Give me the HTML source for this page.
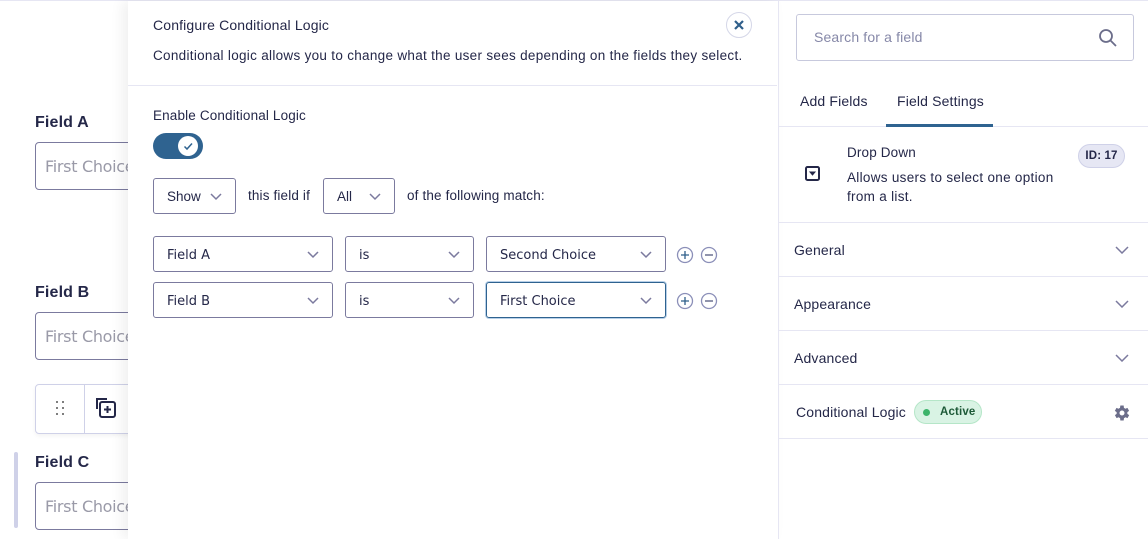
<!DOCTYPE html>
<html><head><style>
*{box-sizing:border-box;margin:0;padding:0}
body{width:1148px;height:539px;overflow:hidden;background:#fff;font-family:"Liberation Sans",sans-serif;color:#242748;position:relative;letter-spacing:.15px}
.a{position:absolute}
.lbl{font-weight:bold;font-size:16px;left:35px}
.inp{left:35px;width:120px;height:48px;border:1px solid #7b7a9e;border-radius:4px;font-size:16px;color:#9a9aa8;padding:14px 0 0 9px;font-family:"DejaVu Sans",sans-serif;letter-spacing:-.3px}
.sel{border:1px solid #7b7a9e;border-radius:3px;height:36px;font-family:"DejaVu Sans",sans-serif;font-size:13px;color:#242748;padding:10px 0 0 13px;letter-spacing:0}
.sel svg{position:absolute;right:13px;top:14px}
.row{left:0;width:370px;border-bottom:1px solid #e6e6f3;height:54px}
.row span{position:absolute;left:16px;top:19px;font-size:14px}
.row svg{position:absolute;left:337px;top:23px}
.circ{width:17px;height:17px;border:1px solid #8b8fb8;border-radius:50%}
</style></head><body>
<div class="a" style="left:0;top:0;width:1148px;height:1px;background:#e6e6f3"></div>
<div class="a lbl" style="top:114px">Field A</div>
<div class="a inp" style="top:142px">First Choice</div>
<div class="a lbl" style="top:284px">Field B</div>
<div class="a inp" style="top:312px">First Choice</div>
<div class="a" style="left:35px;top:384px;width:110px;height:50px;border:1px solid #cfd1e8;border-radius:4px;box-shadow:0 2px 4px rgba(0,0,0,.05)"></div>
<div class="a" style="left:84px;top:385px;width:1px;height:48px;background:#cfd1e8"></div>
<svg class="a" style="left:55px;top:400px" width="10" height="16"><g fill="#555"><circle cx="2" cy="2" r="1"/><circle cx="8" cy="2" r="1"/><circle cx="2" cy="8" r="1"/><circle cx="8" cy="8" r="1"/><circle cx="2" cy="14" r="1"/><circle cx="8" cy="14" r="1"/></g></svg>
<svg class="a" style="left:95px;top:396px" width="24" height="24" fill="none" stroke="#242748" stroke-width="2"><path d="M2 13V3h10"/><rect x="5" y="6" width="15" height="15" rx="2"/><path d="M12.5 10v7M9 13.5h7"/></svg>
<div class="a" style="left:14px;top:452px;width:4px;height:76px;background:#cfd1e8;border-radius:2px"></div>
<div class="a lbl" style="top:454px">Field C</div>
<div class="a inp" style="top:482px">First Choice</div>
<div class="a" style="left:128px;top:1px;width:651px;height:538px;background:#fff;box-shadow:-6px 0 12px rgba(0,0,0,.06);border-right:1px solid #e6e6f3">
<div class="a" style="left:25px;top:16px;font-size:14px">Configure Conditional Logic</div>
<div class="a" style="left:25px;top:47px;font-size:13.5px;letter-spacing:.3px">Conditional logic allows you to change what the user sees depending on the fields they select.</div>
<div class="a circ" style="left:598px;top:11px;width:26px;height:26px;border-color:#d5d7e8"></div>
<svg class="a" style="left:605px;top:18px" width="12" height="12" stroke="#2f5f8a" stroke-width="2.2"><path d="M2 2l8 8M10 2l-8 8"/></svg>
<div class="a" style="left:0;top:84px;width:649px;height:1px;background:#e6e6f3"></div>
<div class="a" style="left:25px;top:107px;font-size:13.5px">Enable Conditional Logic</div>
<div class="a" style="left:25px;top:132px;width:50px;height:26px;border-radius:13px;background:#2f6390"></div>
<div class="a" style="left:50px;top:135px;width:20px;height:20px;border-radius:50%;background:#fff"></div>
<svg class="a" style="left:55px;top:140px" width="10" height="10" fill="none" stroke="#2f6390" stroke-width="1.5"><path d="M1.5 5.5l2.5 2.5 5-5.5"/></svg>
<div class="a sel" style="left:25px;top:177px;width:83px;font-family:'Liberation Sans',sans-serif;font-size:13.5px">Show<svg width="12" height="8" fill="none" stroke="#7b7a9e" stroke-width="1.5"><path d="M1 1l5 5 5-5"/></svg></div>
<div class="a" style="left:120px;top:187px;font-size:13.5px">this field if</div>
<div class="a sel" style="left:195px;top:177px;width:72px;font-family:'Liberation Sans',sans-serif;font-size:13.5px">All<svg width="12" height="8" fill="none" stroke="#7b7a9e" stroke-width="1.5"><path d="M1 1l5 5 5-5"/></svg></div>
<div class="a" style="left:279px;top:187px;font-size:13.5px">of the following match:</div>
<div class="a sel" style="left:25px;top:235px;width:180px;padding-top:11px">Field A<svg width="12" height="8" fill="none" stroke="#7b7a9e" stroke-width="1.5"><path d="M1 1l5 5 5-5"/></svg></div>
<div class="a sel" style="left:217px;top:235px;width:129px;padding-top:11px">is<svg width="12" height="8" fill="none" stroke="#7b7a9e" stroke-width="1.5"><path d="M1 1l5 5 5-5"/></svg></div>
<div class="a sel" style="left:358px;top:235px;width:180px;padding-top:11px">Second Choice<svg width="12" height="8" fill="none" stroke="#7b7a9e" stroke-width="1.5"><path d="M1 1l5 5 5-5"/></svg></div>
<div class="a sel" style="left:25px;top:281px;width:180px;padding-top:11px">Field B<svg width="12" height="8" fill="none" stroke="#7b7a9e" stroke-width="1.5"><path d="M1 1l5 5 5-5"/></svg></div>
<div class="a sel" style="left:217px;top:281px;width:129px;padding-top:11px">is<svg width="12" height="8" fill="none" stroke="#7b7a9e" stroke-width="1.5"><path d="M1 1l5 5 5-5"/></svg></div>
<div class="a sel" style="left:358px;top:281px;width:180px;padding-top:11px;border-color:#2f6390;box-shadow:0 0 0 1px #b8d0e8">First Choice<svg width="12" height="8" fill="none" stroke="#7b7a9e" stroke-width="1.5"><path d="M1 1l5 5 5-5"/></svg></div>
<svg class="a" style="left:547px;top:245px" width="44" height="64" fill="none" stroke-width="1.3"><g stroke="#2f5f8a"><circle cx="10" cy="9" r="7.5" stroke="#8b8fb8"/><path d="M10 5v8M6 9h8"/><circle cx="10" cy="55" r="7.5" stroke="#8b8fb8"/><path d="M10 51v8M6 55h8"/></g><g stroke="#555a80"><circle cx="34" cy="9" r="7.5" stroke="#8b8fb8"/><path d="M30 9h8"/><circle cx="34" cy="55" r="7.5" stroke="#8b8fb8"/><path d="M30 55h8"/></g></svg>
</div>
<div class="a" style="left:778px;top:1px;width:370px;height:538px">
<div class="a" style="left:18px;top:13px;width:338px;height:47px;border:1px solid #c7c9dd;border-radius:3px"></div>
<div class="a" style="left:36px;top:28px;font-size:14px;color:#8688a8">Search for a field</div>
<svg class="a" style="left:320px;top:27px" width="20" height="20" fill="none" stroke="#6b6d8a" stroke-width="1.8"><circle cx="8" cy="8" r="6"/><path d="M12.5 12.5l5.5 5.5"/></svg>
<div class="a" style="left:22px;top:92px;font-size:14px">Add Fields</div>
<div class="a" style="left:119px;top:92px;font-size:14px">Field Settings</div>
<div class="a" style="left:0;top:125px;width:370px;height:1px;background:#e6e6f3"></div>
<div class="a" style="left:108px;top:123px;width:107px;height:3px;background:#2f6390"></div>
<svg class="a" style="left:26px;top:164px" width="18" height="18" fill="none" stroke="#242748" stroke-width="2"><rect x="2" y="2" width="13" height="13" rx="1.5"/><path d="M6 7h5l-2.5 3z" fill="#242748" stroke-width="1"/></svg>
<div class="a" style="left:69px;top:144px;font-size:13.5px">Drop Down</div>
<div class="a" style="left:69px;top:167px;font-size:13.5px;line-height:19px;width:215px;letter-spacing:.3px">Allows users to select one option from a list.</div>
<div class="a" style="left:300px;top:143px;width:47px;height:24px;border-radius:12px;background:#e6e7f4;border:1px solid #cfd1e8;font-size:11.5px;font-weight:bold;text-align:center;padding-top:5px">ID: 17</div>
<div class="a" style="left:0;top:221px;width:370px;height:1px;background:#e6e6f3"></div>
<div class="a row" style="top:222px"><span>General</span><svg width="14" height="8" fill="none" stroke="#7b7a9e" stroke-width="1.5"><path d="M1 1l6 6 6-6"/></svg></div>
<div class="a row" style="top:276px"><span>Appearance</span><svg width="14" height="8" fill="none" stroke="#7b7a9e" stroke-width="1.5"><path d="M1 1l6 6 6-6"/></svg></div>
<div class="a row" style="top:330px"><span>Advanced</span><svg width="14" height="8" fill="none" stroke="#7b7a9e" stroke-width="1.5"><path d="M1 1l6 6 6-6"/></svg></div>
<div class="a row" style="top:384px"><span style="left:18px">Conditional Logic</span></div>
<div class="a" style="left:136px;top:399px;width:68px;height:24px;border-radius:12px;background:#d9f3e4;border:1px solid #b5e6c8;font-size:11.5px;font-weight:bold;color:#1e5a38;padding:5px 0 0 25px">Active</div>
<div class="a" style="left:145px;top:408px;width:7px;height:7px;border-radius:50%;background:#3cb46a"></div>
<svg class="a" style="left:334px;top:402px" width="20" height="20" viewBox="0 0 24 24"><path fill="#6b6d8a" d="M19.4 13a7.5 7.5 0 000-2l2.1-1.6-2-3.5-2.5 1a7 7 0 00-1.7-1L15 3h-4l-.4 2.9a7 7 0 00-1.7 1l-2.5-1-2 3.5L6.6 11a7.5 7.5 0 000 2l-2.1 1.6 2 3.5 2.5-1a7 7 0 001.7 1L11 21h4l.4-2.9a7 7 0 001.7-1l2.5 1 2-3.5zM13 15a3 3 0 110-6 3 3 0 010 6z" transform="translate(-1 0)"/></svg>
</div>
</body></html>
